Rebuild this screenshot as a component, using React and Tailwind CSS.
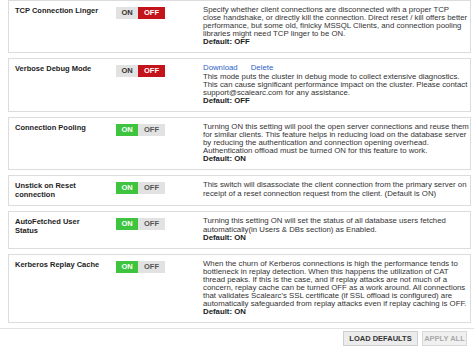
import React from "react";

const settings = [
  {
    id: "linger",
    label: "TCP Connection Linger",
    on: false,
    desc: "Specify whether client connections are disconnected with a proper TCP close handshake, or directly kill the connection. Direct reset / kill offers better performance, but some old, finicky MSSQL Clients, and connection pooling libraries might need TCP linger to be ON.",
    def: "OFF",
  },
  {
    id: "debug",
    label: "Verbose Debug Mode",
    on: false,
    links: true,
    desc: "This mode puts the cluster in debug mode to collect extensive diagnostics. This can cause significant performance impact on the cluster. Please contact support@scalearc.com for any assistance.",
    def: "OFF",
  },
  {
    id: "pooling",
    label: "Connection Pooling",
    on: true,
    desc: "Turning ON this setting will pool the open server connections and reuse them for similar clients. This feature helps in reducing load on the database server by reducing the authentication and connection opening overhead. Authentication offload must be turned ON for this feature to work.",
    def: "ON",
  },
  {
    id: "unstick",
    label: "Unstick on Reset connection",
    on: true,
    desc: "This switch will disassociate the client connection from the primary server on receipt of a reset connection request from the client. (Default is ON)",
  },
  {
    id: "autofetch",
    label: "AutoFetched User Status",
    on: true,
    desc: "Turning this setting ON will set the status of all database users fetched automatically(in Users & DBs section) as Enabled.",
    def: "ON",
  },
  {
    id: "kerberos",
    label: "Kerberos Replay Cache",
    on: true,
    desc: "When the churn of Kerberos connections is high the performance tends to bottleneck in replay detection. When this happens the utilization of CAT thread peaks. If this is the case, and if replay attacks are not much of a concern, replay cache can be turned OFF as a work around. All connections that validates Scalearc's SSL certificate (if SSL offload is configured) are automatically safeguarded from replay attacks even if replay caching is OFF.",
    def: "ON",
  },
];

function Toggle({ on }) {
  return (
    <div className="mt-[1px] flex h-[12px] w-[49px] shrink-0 text-[7.5px] font-bold leading-[12px]">
      <div
        className={
          on
            ? "w-[22px] bg-[#3ec43e] text-center text-white"
            : "w-[22px] bg-[#e2e2e2] text-center text-[#333]"
        }>
        ON
      </div>
      <div
        className={
          on
            ? "w-[27px] bg-[#e2e2e2] text-center text-[#555]"
            : "w-[27px] bg-[#c3141c] text-center text-white"
        }>
        OFF
      </div>
    </div>
  );
}

function SettingRow({ item }) {
  return (
    <div className="flex border border-[#dcdcdc] bg-white pb-[6px] pl-[6px] pr-[1px] pt-[5px]">
      <div className="w-[101px] shrink-0 pr-[12px] pt-[1px] text-[7.5px] font-bold leading-[8.5px] text-[#222]">
        {item.label}
      </div>
      <Toggle on={item.on} />
      <div className="ml-[38px] flex-1 text-[7.8px] leading-[8.1px] text-[#333]">
        {item.links && (
          <div className="flex gap-[13px] text-[#2d62c4]">
            <span>Download</span>
            <span>Delete</span>
          </div>
        )}
        <p>{item.desc}</p>
        {item.def && (
          <p className="font-bold text-[#222]">Default: {item.def}</p>
        )}
      </div>
    </div>
  );
}

export default function App() {
  return (
    <div className="h-[350px] w-[474px] overflow-hidden bg-white font-['Liberation_Sans',Arial,sans-serif]">
      <div className="flex flex-col gap-[5px] pl-[8px] pr-[3px]">
        {settings.map((item) => (
          <SettingRow key={item.id} item={item} />
        ))}
      </div>
      <div className="mt-[5px] flex justify-end gap-[4px] border-t border-[#e2e2e2] pr-[7px] pt-[2px]">
        <button className="h-[15px] w-[75px] border border-[#cfcfcf] bg-[#ececec] text-[7.5px] font-bold text-[#333]">
          LOAD DEFAULTS
        </button>
        <button className="h-[15px] w-[45px] border border-[#d8d8d8] bg-[#f0f0f0] text-[7.5px] font-bold text-[#aaa]">
          APPLY ALL
        </button>
      </div>
    </div>
  );
}
